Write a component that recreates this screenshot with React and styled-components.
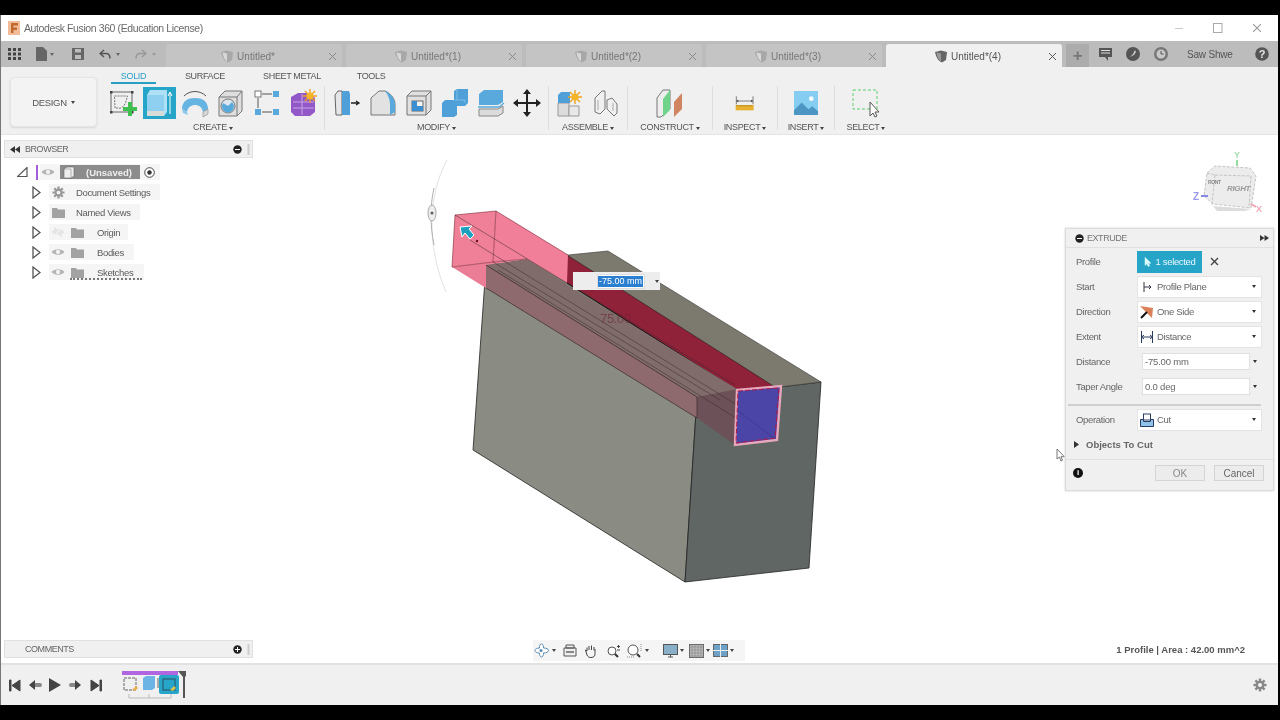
import React from 'react';
import styled, { createGlobalStyle } from 'styled-components';

const Global = createGlobalStyle`
  html, body { margin: 0; padding: 0; background: #000; }
  body { width: 1280px; height: 720px; overflow: hidden; font-family: "Liberation Sans", Arial, sans-serif; }
`;

const Shell = styled.div`
  width: 1280px;
  height: 720px;
  background: #000;
  padding: 15px 2px 15px 0;
  box-sizing: border-box;
`;
const Win = styled.div`
  height: 100%;
  display: flex;
  flex-direction: column;
  background: #fff;
  border-left: 1px solid #777;
  letter-spacing: -0.35px;
  filter: blur(0.4px);
`;

/* title bar */
const TitleBar = styled.div`
  height: 26px;
  flex: none;
  display: flex;
  align-items: center;
  padding: 0 16px 0 7px;
  background: #fff;
  color: #6a6a6a;
  font-size: 10.5px;
  letter-spacing: -0.4px;
`;
const TitleText = styled.span`
  margin-left: 4px;
  flex: 1;
`;
const WinButtons = styled.div`
  display: flex;
  align-items: center;
  gap: 29px;
`;

/* tabs */
const TabBar = styled.div`
  height: 26px;
  flex: none;
  display: flex;
  align-items: flex-end;
  background: #bcbcbc;
  padding-left: 7px;
`;
const QuickTools = styled.div`
  width: 158px;
  height: 26px;
  display: flex;
  align-items: center;
  flex: none;
  gap: 3px;
`;
const Tabs = styled.div`
  display: flex;
  gap: 4px;
  margin-right: 4px;
`;
const Tab = styled.div`
  width: 176px;
  height: 23px;
  box-sizing: border-box;
  position: relative;
  display: flex;
  align-items: center;
  justify-content: center;
  gap: 3px;
  padding: 2px 13px 0 0;
  border-radius: 3px 3px 0 0;
  background: ${(p) => (p.$active ? '#f0f0f0' : '#c4c4c4')};
  color: ${(p) => (p.$active ? '#555' : '#777')};
  font-size: 10px;
  letter-spacing: 0;
`;
const TabClose = styled.span`
  position: absolute;
  right: 5px;
  top: 8px;
  display: flex;
`;
const PlusTab = styled.div`
  width: 23px;
  height: 23px;
  background: #acacac;
  color: #777;
  display: flex;
  align-items: center;
  justify-content: center;
  font-size: 17px;
  font-weight: 700;
  margin-right: 2px;
`;
const AccountTools = styled.div`
  display: flex;
  align-items: center;
  height: 26px;
  flex: 1;
  color: #555;
  font-size: 10px;
`;
const AccountIcon = styled.span`
  width: 28px;
  display: flex;
  justify-content: center;
`;
const UserName = styled.span`
  margin-left: 12px;
  width: 47px;
  white-space: nowrap;
  letter-spacing: -0.2px;
  padding-top: 1px;
`;
const QuickIcon = styled.span`
  display: flex;
  align-items: center;
  margin-left: ${(p) => p.$ml || 0}px;
`;

/* ribbon */
const Ribbon = styled.div`
  height: 68px;
  flex: none;
  display: flex;
  background: #f0f0f0;
  border-bottom: 1px solid #e4e4e4;
  box-sizing: border-box;
`;
const DesignButton = styled.div`
  width: 87px;
  height: 50px;
  margin: 10px 8px 0 9px;
  box-sizing: border-box;
  border: 1px solid #e4e4e4;
  border-radius: 4px;
  box-shadow: 0 1px 2px #d8d8d8;
  background: #f3f3f3;
  display: flex;
  align-items: center;
  justify-content: center;
  gap: 4px;
  color: #555;
  font-size: 9.5px;
`;
const RibbonBody = styled.div`
  display: flex;
  flex-direction: column;
`;
const RibbonTabs = styled.div`
  display: flex;
  margin-left: 6px;
  height: 18px;
`;
const RibbonTab = styled.div`
  width: ${(p) => p.$w}px;
  box-sizing: border-box;
  height: 17px;
  display: flex;
  justify-content: center;
  padding-top: 4px;
  font-size: 9px;
  color: ${(p) => (p.$active ? '#2a9fc4' : '#555')};
  position: relative;
  &::after {
    content: '';
    display: ${(p) => (p.$active ? 'block' : 'none')};
    position: absolute;
    left: 0;
    right: 0;
    bottom: 0;
    height: 2px;
    background: #2a9fc4;
  }
`;
const Groups = styled.div`
  display: flex;
  height: 47px;
`;
const Group = styled.div`
  width: ${(p) => p.$w}px;
  display: flex;
  flex-direction: column;
  align-items: center;
  flex: none;
`;
const GroupSep = styled.div`
  width: 1px;
  height: 44px;
  margin: 1px 3px 0;
  background: #dedede;
`;
const ToolRow = styled.div`
  height: 35px;
  display: flex;
  align-items: center;
  justify-content: center;
`;
const Tool = styled.div`
  width: 36px;
  height: 32px;
  display: flex;
  align-items: center;
  justify-content: center;
`;
const GroupLabel = styled.div`
  margin-top: 2px;
  color: #555;
  font-size: 9px;
  white-space: nowrap;
`;

/* viewport */
const Viewport = styled.div`
  position: relative;
  flex: 1;
  background: #fff;
  overflow: hidden;
`;
const Scene = styled.svg`
  position: absolute;
  left: 0;
  top: 0;
`;
const Panel = styled.div`
  position: absolute;
  left: 3px;
  width: 249px;
  height: 18px;
  box-sizing: border-box;
  background: #f0f0f0;
  border: 1px solid #e0e0e0;
  display: flex;
  align-items: center;
  padding: 0 1px 0 5px;
  color: #666;
  font-size: 9px;
  letter-spacing: -0.45px;
  top: ${(p) => p.$top}px;
`;
const PanelName = styled.span`
  flex: 1;
  margin-left: ${(p) => p.$indent}px;
`;
const Tree = styled.div`
  position: absolute;
  left: 0;
  top: 27px;
  display: flex;
  flex-direction: column;
`;
const TreeRow = styled.div`
  height: 20px;
  display: flex;
  align-items: center;
  padding-left: ${(p) => p.$indent || 31}px;
`;
const Expander = styled.span`
  width: 17px;
  display: flex;
`;
const Chip = styled.div`
  position: relative;
  height: 16px;
  display: flex;
  align-items: center;
  background: #f5f5f5;
  color: #5a5a5a;
  font-size: 9.5px;
  width: ${(p) => p.$w}px;
`;
const Slot = styled.span`
  width: ${(p) => p.$w}px;
  box-sizing: border-box;
  padding-right: ${(p) => p.$pr || 0}px;
  display: flex;
  justify-content: center;
  flex: none;
`;
const ChipText = styled.span`
  margin-left: 9px;
  white-space: nowrap;
`;
const DashLine = styled.span`
  position: absolute;
  left: 21px;
  right: 2px;
  bottom: 0;
  border-bottom: 2px dotted #777;
`;
const RootBar = styled.span`
  width: 2px;
  height: 15px;
  background: #a45fd8;
  margin-right: 2px;
`;
const RootName = styled.div`
  width: 80px;
  height: 14px;
  background: #8c8c8c;
  color: #eee;
  font-weight: 700;
  font-size: 9.5px;
  letter-spacing: 0;
  display: flex;
  align-items: center;
`;
const RootLabel = styled.span`
  margin-left: 9px;
`;
const NavBar = styled.div`
  position: absolute;
  left: 532px;
  top: 505px;
  width: 212px;
  height: 21px;
  background: #f5f5f5;
  display: flex;
  align-items: center;
  padding-left: 1px;
  box-sizing: border-box;
  gap: 1px;
`;
const NavItem = styled.span`
  display: flex;
  align-items: center;
  margin-left: ${(p) => p.$ml || 0}px;
`;
const Status = styled.div`
  position: absolute;
  right: 33px;
  top: 509px;
  font-size: 9.5px;
  font-weight: 700;
  letter-spacing: 0;
  color: #555;
`;
const Caret = styled.span`
  display: inline-block;
  width: 0;
  height: 0;
  border-left: 2.5px solid transparent;
  border-right: 2.5px solid transparent;
  border-top: 3px solid ${(p) => p.$c || '#444'};
  margin-left: ${(p) => p.$ml || 0}px;
`;

/* floating distance input */
const FloatInput = styled.div`
  position: absolute;
  left: 572px;
  top: 137px;
  width: 87px;
  height: 18px;
  background: #ededed;
  display: flex;
  align-items: center;
  box-sizing: border-box;
  padding-left: 24px;
`;
const FloatField = styled.div`
  width: 46px;
  height: 13px;
  background: #fff;
  border: 1px solid #ddd;
  margin-right: 10px;
  display: flex;
  align-items: center;
`;
const Selected = styled.span`
  background: #2a7fd0;
  color: #fff;
  font-size: 9px;
  line-height: 11px;
  padding: 0 1px;
  white-space: nowrap;
  letter-spacing: 0;
`;

/* extrude dialog */
const Dialog = styled.div`
  position: absolute;
  left: 1064px;
  top: 93px;
  width: 209px;
  height: 263px;
  box-sizing: border-box;
  background: #f0f0f0;
  border: 1px solid #dcdcdc;
  box-shadow: 0 0 2px #ccc;
  display: flex;
  flex-direction: column;
  color: #666;
  font-size: 9.5px;
`;
const DialogHead = styled.div`
  height: 18px;
  flex: none;
  display: flex;
  align-items: center;
  padding: 0 4px 0 9px;
  border-bottom: 1px solid #e0e0e0;
  color: #777;
  font-size: 9px;
  letter-spacing: -0.45px;
`;
const DialogTitle = styled.span`
  flex: 1;
  margin-left: 3px;
`;
const Rows = styled.div`
  display: flex;
  flex-direction: column;
  padding: ${(p) => p.$pt ?? 1}px 0 0 10px;
`;
const Row = styled.div`
  height: 25px;
  display: flex;
  align-items: center;
`;
const RowLabel = styled.span`
  width: 61px;
  flex: none;
`;
const SelectionButton = styled.div`
  width: 65px;
  height: 22px;
  background: #27a5c8;
  color: #e8f8fc;
  display: flex;
  align-items: center;
  justify-content: center;
  gap: 4px;
`;
const ClearButton = styled.span`
  margin-left: 8px;
  display: flex;
`;
const SelectBox = styled.div`
  width: 125px;
  height: 22px;
  box-sizing: border-box;
  background: #fff;
  border: 1px solid #e4e4e4;
  display: flex;
  align-items: center;
  padding: 0 5px 0 2px;
  gap: 3px;
  color: #666;
`;
const SelectText = styled.span`
  flex: 1;
`;
const InputBox = styled.div`
  width: 108px;
  height: 17px;
  box-sizing: border-box;
  margin-left: 5px;
  background: #fff;
  border: 1px solid #e0e0e0;
  display: flex;
  align-items: center;
  padding-left: 2px;
  margin-right: 3px;
  letter-spacing: -0.2px;
`;
const Divider = styled.div`
  height: 2px;
  margin: 5px 12px 1px 2px;
  background: #cfcfcf;
`;
const ObjectsRow = styled.div`
  height: 25px;
  display: flex;
  align-items: center;
  gap: 7px;
  margin-left: -2px;
  font-weight: 700;
  letter-spacing: 0;
  color: #666;
`;
const Footer = styled.div`
  margin-top: 2px;
  border-top: 1px solid #e0e0e0;
  flex: 1;
  display: flex;
  align-items: flex-start;
  padding: 5px 8px 0 7px;
`;
const InfoDot = styled.span`
  width: 10px;
  height: 10px;
  border-radius: 50%;
  background: #111;
  color: #fff;
  font-size: 8px;
  font-weight: 700;
  line-height: 10px;
  text-align: center;
  margin: 3px 72px 0 0;
`;
const DialogButton = styled.div`
  width: 50px;
  height: 16px;
  box-sizing: border-box;
  border: 1px solid #d4d4d4;
  background: #ececec;
  color: ${(p) => (p.$dim ? '#888' : '#666')};
  font-size: 10px;
  letter-spacing: 0;
  display: flex;
  align-items: center;
  justify-content: center;
  margin-right: 9px;
  &:last-child { margin-right: 0; }
`;

/* timeline */
const Timeline = styled.div`
  height: 42px;
  flex: none;
  display: flex;
  align-items: center;
  background: #f0f0f0;
  border-top: 2px solid #e2e2e2;
  box-sizing: border-box;
  padding: 0 11px 0 8px;
`;
const Player = styled.div`
  display: flex;
  align-items: center;
  gap: 5px;
`;
const History = styled.div`
  margin-left: 18px;
  flex: 1;
  display: flex;
`;

/* ---- drawings ---- */
const X = ({ c = '#777', s = 9, sw = 1 }) => (
  <svg width={s} height={s} viewBox="0 0 9 9"><path d="M1 1l7 7M8 1L1 8" stroke={c} strokeWidth={sw} /></svg>
);
const TabCube = ({ dark }) => (
  <svg width="14" height="13" viewBox="0 0 14 13">
    <path d="M1 2l6-1.500 6 1.500-1 8-4 2.500C4 11 2 7 1 2z" fill={dark ? '#666' : '#a8a8a8'} />
    <path d="M2.500 2.500L7 3.500v8C5 10 3 7 2.500 2.500z" fill={dark ? '#999' : '#d8d8d8'} />
  </svg>
);
const Eye = ({ off }) => (
  <svg width="14" height="10" viewBox="0 0 13 9">
    <path d="M.5 4.500C3 1 10 1 12.500 4.500 10 8 3 8 .5 4.500z" fill={off ? '#e4e4e4' : '#b4b4b4'} />
    <circle cx="6.500" cy="4.500" r="2" fill={off ? '#f4f4f4' : '#f2f2f2'} />
    {off && <path d="M3 .5l7 8" stroke="#ddd" />}
  </svg>
);
const Folder = () => (
  <svg width="13" height="11" viewBox="0 0 13 11">
    <path d="M0 1h5l1 1.500h7V11H0z" fill="#a2a2a2" />
  </svg>
);
const Gear = ({ c = '#999', s = 13 }) => (
  <svg width={s} height={s} viewBox="0 0 14 14">
    <g stroke={c} strokeWidth="2.400">
      <path d="M7 .5v13M.5 7h13M2.400 2.400l9.200 9.200M11.600 2.400l-9.200 9.200" />
    </g>
    <circle cx="7" cy="7" r="4.300" fill={c} />
    <circle cx="7" cy="7" r="2" fill="#f4f4f4" />
  </svg>
);
const Expand = () => (
  <svg width="9" height="13" viewBox="0 0 9 13"><path d="M1 1l7 5.500L1 12z" fill="#fff" stroke="#555" strokeWidth="1.300" /></svg>
);
const MinusDot = ({ plus }) => (
  <svg width="9" height="9" viewBox="0 0 9 9">
    <circle cx="4.500" cy="4.500" r="4.200" fill="#222" />
    <path d={plus ? 'M2 4.500h5M4.500 2v5' : 'M2 4.500h5'} stroke="#fff" />
  </svg>
);
const Grip = () => (
  <svg width="4" height="11" viewBox="0 0 4 11"><path d="M1.500 0v11" stroke="#ccc" strokeWidth="2" /></svg>
);

const Sketch = () => (
  <svg width="30" height="30" viewBox="0 0 30 30">
    <rect x="3" y="4" width="21" height="20" fill="none" stroke="#666" />
    <path d="M6.500 8h13l-2 7c-2 4-5 6-7 5H7z" fill="none" stroke="#777" strokeDasharray="2 1" />
    {[[3, 4], [24, 4], [3, 24], [24, 24]].map(([x, y]) => <rect key={x + '' + y} x={x - 1} y={y - 1} width="2.500" height="2.500" fill="#444" />)}
    <path d="M22 14v14M15 21h14" stroke="#3fbf4f" strokeWidth="4" />
  </svg>
);
const ExtrudeTool = () => (
  <svg width="33" height="32" viewBox="0 0 33 32">
    <rect width="33" height="32" fill="#27a5c8" />
    <path d="M4 8l3-5h17v22l-3 4H4z" fill="#aee0f6" />
    <path d="M4 8h17v21H4z" fill="#8fd0f0" />
    <path d="M4 24h17v5H4z" fill="#d8dcd8" />
    <path d="M27 27V6M25 9l2-4 2 4" stroke="#fff" fill="none" />
  </svg>
);
const Revolve = () => (
  <svg width="30" height="30" viewBox="0 0 30 30">
    <path d="M2 21c0-8 6-11 13-11s13 3 13 11l-5 3c-1-5-4-7-8-7s-7 2-8 7z" fill="#66b4e2" />
    <path d="M2 21l5 3 1 3-5-2z" fill="#8cc7ea" />
    <path d="M23 24l5-3v5l-5 3z" fill="#d8d8d8" stroke="#888" strokeWidth=".6" />
    <path d="M4 8c6-6 16-6 22 0" fill="none" stroke="#555" />
  </svg>
);
const Hole = () => (
  <svg width="30" height="30" viewBox="0 0 30 30">
    <path d="M3 9l6-6h17v20l-5 5H3z" fill="#dedede" stroke="#777" />
    <path d="M3 9h18v19M21 9l5-6" fill="none" stroke="#777" />
    <circle cx="12" cy="18" r="7" fill="#dce6ec" stroke="#777" />
    <path d="M12 18l-5-3a6 6 0 1 0 9-1z" fill="#5aa9dc" />
  </svg>
);
const PatternTool = () => (
  <svg width="30" height="30" viewBox="0 0 30 30">
    <rect x="3" y="3" width="6" height="6" fill="#fff" stroke="#777" />
    <rect x="21" y="3" width="6" height="6" fill="#5aa9dc" />
    <rect x="3" y="21" width="6" height="6" fill="#5aa9dc" />
    <rect x="21" y="21" width="6" height="6" fill="#5aa9dc" />
    <path d="M10 6h10M6 10v10M10 24h10" stroke="#555" />
  </svg>
);
const Star = ({ cx, cy }) => (
  <g>
    <path d={`M${cx} ${cy - 7}v14M${cx - 7} ${cy}h14M${cx - 5} ${cy - 5}l10 10M${cx + 5} ${cy - 5}l-10 10`} stroke="#f0a020" strokeWidth="1.400" />
    <circle cx={cx} cy={cy} r="3.600" fill="#f5b52a" />
  </g>
);
const FormTool = () => (
  <svg width="30" height="30" viewBox="0 0 30 30">
    <path d="M3 9l7-4h12l5 5v14l-5 4H7l-4-4z" fill="#9358c8" />
    <path d="M5 14h21M14 6v21M5 20h21" stroke="#c7a4e4" />
    <Star cx={22} cy={8} />
  </svg>
);
const PressPull = () => (
  <svg width="30" height="30" viewBox="0 0 30 30">
    <path d="M3 7l3-4h4v24H4z" fill="#e6e6e6" stroke="#666" />
    <path d="M10 3h7l1 3v21h-8z" fill="#4f9fd8" />
    <path d="M19 15h7M24 13l3 2-3 2" stroke="#222" fill="none" strokeWidth="1.300" />
  </svg>
);
const Fillet = () => (
  <svg width="30" height="30" viewBox="0 0 30 30">
    <path d="M3 10l8-7h6c7 3 10 9 10 13v11H3z" fill="#e2e2e2" stroke="#777" />
    <path d="M17 3c7 3 10 9 10 13v8l-5 3V16c0-5-2-9-5-13z" fill="#5aa9dc" />
  </svg>
);
const Shell3d = () => (
  <svg width="30" height="30" viewBox="0 0 30 30">
    <path d="M3 8l5-5h19v19l-5 5H3z" fill="#e0e0e0" stroke="#777" />
    <path d="M3 8h19v19M22 8l5-5" fill="none" stroke="#777" />
    <rect x="8" y="13" width="11" height="10" fill="#f4f4f4" stroke="#666" />
    <path d="M8 13h5v5h6v5H8z" fill="#3b8fd0" />
  </svg>
);
const Combine = () => (
  <svg width="30" height="30" viewBox="0 0 30 30">
    <path d="M2 15l3-3h9v-9l3-2h11v14l-3 3h-8v9l-3 2H2z" fill="#4f9fd8" />
    <path d="M14 12h11v3M17 1v11" stroke="#7cbde8" fill="none" />
  </svg>
);
const Split = () => (
  <svg width="30" height="30" viewBox="0 0 30 30">
    <path d="M3 6l5-4h19v12l-5 3H3z" fill="#5aa9dc" />
    <path d="M2 19h21l5-4" stroke="#5aa9dc" strokeWidth="1.400" fill="none" />
    <path d="M3 21h19l5-3v7l-5 3H3z" fill="#dcdcdc" stroke="#888" />
  </svg>
);
const MoveTool = () => (
  <svg width="30" height="30" viewBox="0 0 30 30">
    <path d="M15 3v24M3 15h24" stroke="#222" strokeWidth="2" />
    <path d="M15 1l4 5h-8zM15 29l4-5h-8zM1 15l5-4v8zM29 15l-5-4v8z" fill="#222" />
  </svg>
);
const NewComponent = () => (
  <svg width="30" height="30" viewBox="0 0 30 30">
    <path d="M3 15h11v13H3z" fill="#dcdcdc" stroke="#999" />
    <path d="M14 18h10v10H14z" fill="#e8e8e8" stroke="#999" />
    <path d="M3 7l3-3h9v11H3z" fill="#4f9fd8" />
    <Star cx={20} cy={9} />
  </svg>
);
const JointTool = () => (
  <svg width="30" height="30" viewBox="0 0 30 30">
    <path d="M4 24V10l7-7h3v18l-5 5z" fill="#f0f0f0" stroke="#777" />
    <path d="M16 12l5-2 5 6v9l-3 3-7-7z" fill="#f0f0f0" stroke="#777" />
    <path d="M7 12v10M22 15v8" stroke="#aaa" />
  </svg>
);
const PlaneTool = () => (
  <svg width="30" height="30" viewBox="0 0 30 30">
    <path d="M2 10l6-8h7v19l-9 8H2z" fill="#eee" stroke="#777" />
    <path d="M8 11l7-9v20l-7 7z" fill="#6fd48a" />
    <path d="M19 14l8-9v16l-8 8z" fill="#d08560" />
  </svg>
);
const Ruler = () => (
  <svg width="26" height="16" viewBox="0 0 30 24">
    <path d="M2 2v12M27 2v12M2 9h25" stroke="#444" fill="none" />
    <path d="M2 9l3-2v4zM27 9l-3-2v4z" fill="#444" />
    <rect x="1" y="15" width="27" height="8" fill="#e8b030" />
    <path d="M3 15v2M6 15v2M9 15v2M12 15v2M15 15v2M18 15v2M21 15v2M24 15v2" stroke="#8a6a10" />
  </svg>
);
const Picture = () => (
  <svg width="24" height="24" viewBox="0 0 25 25">
    <rect width="25" height="25" fill="#86cdf2" />
    <circle cx="18" cy="8" r="2.500" fill="#f4f9fb" />
    <path d="M0 20l8-8 7 7 4-3 6 5v4H0z" fill="#4d96c4" />
  </svg>
);
const SelectTool = () => (
  <svg width="32" height="32" viewBox="0 0 32 32">
    <rect x="3" y="3" width="24" height="19" fill="none" stroke="#5ecf6c" strokeDasharray="3 2" />
    <path d="M20 15v14l3-3 2 4 2-1-2-4h4z" fill="#fff" stroke="#555" />
  </svg>
);
const Pointer = ({ fill = '#fff', stroke = '#555', s = 12 }) => (
  <svg width={s * 0.8} height={s} viewBox="0 0 8 12">
    <path d="M.5.5v9.500l2.300-2 1.400 3.300 1.700-.7-1.400-3.200H7.500z" fill={fill} stroke={stroke} strokeWidth=".7" />
  </svg>
);

const ModelScene = () => (
  <Scene width="1277" height="527" viewBox="1 135 1277 527">
    {/* rotate manipulator */}
    <path d="M447 160C428 195 426 245 446 292" fill="none" stroke="#e2e2e2" />
    <path d="M434 188C430 205 430 225 434 245" fill="none" stroke="#b0b0b0" />
    <ellipse cx="432" cy="213" rx="4" ry="8" fill="#eee" stroke="#aaa" />
    <circle cx="432" cy="213" r="1.600" fill="#666" />
    {/* block */}
    <path d="M486 265L473 450 685 582 697 397z" fill="#8a8b82" stroke="#222" strokeWidth=".8" />
    <path d="M697 397L821 382 809 568 685 582z" fill="#606663" stroke="#222" strokeWidth=".8" />
    <path d="M568 255L608 251 821 382 697 397 486 265z" fill="#7c796f" stroke="#333" strokeWidth=".6" />
    {/* cut slot */}
    <path d="M567 255L775 387 737 390 567 283z" fill="#8f2139" />
    <path d="M567 283L737 390" stroke="#111" strokeWidth="1" />
    <path d="M567 255L775 387" stroke="#222" strokeWidth=".6" />
    <path d="M486 265L527 259 578 292 737 389 697 397z" fill="#806c6a" />
    <path d="M486 265L697 397 697 418 486 288z" fill="#8e6a6e" />
    <path d="M697 397L737 389 735 445 697 418z" fill="#6c5158" />
    <path d="M697 397L486 265M697 418L486 288M697 397v21" stroke="#3a2a2c" strokeWidth=".7" fill="none" />
    {/* extrusion preview */}
    <path d="M455 215L496 211 493 262 452 267z" fill="#ef8098" />
    <path d="M496 211L568 255 567 283 527 259 493 262z" fill="#f17f99" />
    <path d="M452 267L493 262 527 259 486 265 486 288z" fill="#ec7d96" />
    <path d="M455 215L496 211 493 262 452 267zM496 211L568 255M493 262L527 259" fill="none" stroke="#7a2838" strokeWidth=".6" />
    <path d="M455 215L735 385M470 240L737 405M493 262L720 400M498 270L736 418" stroke="#3c2a2c" strokeWidth=".5" fill="none" />
    {/* profile */}
    <path d="M737 390L781 386 777 440 735 445z" fill="#4c45a8" stroke="#e8a8bc" strokeWidth="2.400" />
    <path d="M738 391L779 388 775 438 736 443z" fill="none" stroke="#b01840" strokeWidth="1" strokeDasharray="5 2" />
    <path d="M737 410L775 439" stroke="#36307c" strokeWidth=".5" />
    <circle cx="477" cy="241" r="1.200" fill="#6b1020" />
    <text x="600" y="323" fontSize="13" fill="#6a2030" opacity=".55" fontFamily="Liberation Sans, sans-serif">75.00</text>
    {/* direction arrow */}
    <path d="M460 227l12-1-3 3 5 6-4 4-5-6-3 4z" fill="#1da0c0" stroke="#fff" strokeWidth="1" />
    {/* view cube */}
    <g style={{ filter: 'blur(0.5px)' }}>
      <g transform="translate(0 -6)">
        <path d="M1207 179l8-7 35 2 6 8-5 32-38-4-9-8z" fill="#ececec" stroke="#c4c4c4" strokeDasharray="3 1.500" />
        <path d="M1215 181l36 1-2 32M1215 181l-3 30M1207 179l8 2" fill="none" stroke="#c4c4c4" strokeDasharray="3 1.500" />
        <path d="M1213 212l38 3-6 2-28 0z" fill="#dcdcdc" />
        <text x="1227" y="197" fontSize="8" fontWeight="700" fontStyle="italic" fill="#999" fontFamily="Liberation Sans, sans-serif">RIGHT</text>
        <text x="1208" y="190" fontSize="5" fontWeight="700" fill="#888" fontFamily="Liberation Sans, sans-serif">RONT</text>
      </g>
      <path d="M1237 166v-6" stroke="#8fdc9e" strokeWidth="2" />
      <text x="1234" y="158" fontSize="9" fontWeight="700" fill="#a5e0b0" fontFamily="Liberation Sans, sans-serif">Y</text>
      <path d="M1201 196h7" stroke="#8888e8" strokeWidth="2" />
      <text x="1193" y="200" fontSize="10" fontWeight="700" fill="#9a9aea" fontFamily="Liberation Sans, sans-serif">Z</text>
      <path d="M1251 204l5 3" stroke="#f0a0b0" strokeWidth="2" />
      <text x="1256" y="212" fontSize="9" fontWeight="700" fill="#f0a8b8" fontFamily="Liberation Sans, sans-serif">X</text>
    </g>
    {/* mouse */}
    <path d="M1057 449v10l2.500-2 1.500 4 1.500-.7-1.500-3.600h3.300z" fill="#fff" stroke="#555" strokeWidth=".8" />
  </Scene>
);

const TreeItem = ({ w, icons, name, dashed }) => (
  <TreeRow>
    <Expander><Expand /></Expander>
    <Chip $w={w}>
      {icons[0] === 'eye' && <Slot $w={18}><Eye /></Slot>}
      {icons[0] === 'off' && <Slot $w={18}><Eye off /></Slot>}
      {icons[0] === 'gear' && <Slot $w={18}><Gear /></Slot>}
      {icons[0] === 'folder' && <Slot $w={18}><Folder /></Slot>}
      {icons[1] && <Slot $w={21}><Folder /></Slot>}
      <ChipText>{name}</ChipText>
      {dashed && <DashLine />}
    </Chip>
  </TreeRow>
);

const SmallIcon = ({ d, fill = 'none', stroke = '#444', w = 14, h = 14, vb = '0 0 14 14', sw = 1 }) => (
  <svg width={w} height={h} viewBox={vb}><path d={d} fill={fill} stroke={stroke} strokeWidth={sw} /></svg>
);

export default function App() {
  return (
    <Shell>
      <Global />
      <Win>
        <TitleBar>
          <svg width="12" height="14" viewBox="0 0 12 14">
            <rect width="12" height="14" fill="#f3bc98" />
            <path d="M3 2h7v2.500H5.500v2H9V9H5.500v3H3z" fill="#c06a30" />
          </svg>
          <TitleText>Autodesk Fusion 360 (Education License)</TitleText>
          <WinButtons>
            <svg width="10" height="9" viewBox="0 0 10 9"><path d="M1 4.500h8" stroke="#ccc" /></svg>
            <svg width="10" height="10" viewBox="0 0 10 10"><rect x=".5" y=".5" width="8.500" height="9" fill="none" stroke="#aaa" /></svg>
            <X c="#999" s={10} />
          </WinButtons>
        </TitleBar>

        <TabBar>
          <QuickTools>
            <QuickIcon>
              <svg width="13" height="12" viewBox="0 0 13 12"><path d="M0 0h3v3H0zM5 0h3v3H5zM10 0h3v3h-3zM0 4.500h3v3H0zM5 4.500h3v3H5zM10 4.500h3v3h-3zM0 9h3v3H0zM5 9h3v3H5zM10 9h3v3h-3z" fill="#444" /></svg>
            </QuickIcon>
            <QuickIcon $ml={12}>
              <svg width="11" height="14" viewBox="0 0 11 14"><path d="M0 0h7l4 4v10H0z" fill="#666" /></svg>
            </QuickIcon>
            <Caret $c="#666" />
            <QuickIcon $ml={15}>
              <svg width="12" height="12" viewBox="0 0 12 12"><path d="M0 0h12v12H0z" fill="#666" /><path d="M3 1h6v3.500H3zM3 7h6v4H3z" fill="#bcbcbc" /></svg>
            </QuickIcon>
            <QuickIcon $ml={12}>
              <svg width="12" height="11" viewBox="0 0 12 11"><path d="M5 1L1 4.500 5 8M1 4.500h6c3 0 4 2 4 5" fill="none" stroke="#555" strokeWidth="1.500" /></svg>
            </QuickIcon>
            <Caret $c="#666" $ml={2} />
            <QuickIcon $ml={12}>
              <svg width="12" height="11" viewBox="0 0 12 11"><path d="M7 1l4 3.500L7 8M11 4.500H5c-3 0-4 2-4 5" fill="none" stroke="#999" strokeWidth="1.500" /></svg>
            </QuickIcon>
            <Caret $c="#999" $ml={2} />
          </QuickTools>
          <Tabs>
            {['Untitled*', 'Untitled*(1)', 'Untitled*(2)', 'Untitled*(3)', 'Untitled*(4)'].map((name, i) => (
              <Tab key={name} $active={i === 4}>
                <TabCube dark={i === 4} />
                {name}
                <TabClose><X c={i === 4 ? '#555' : '#888'} /></TabClose>
              </Tab>
            ))}
          </Tabs>
          <PlusTab>+</PlusTab>
          <AccountTools>
            <AccountIcon>
              <svg width="13" height="13" viewBox="0 0 13 13"><path d="M0 0h13v9H9v4L6 9H0z" fill="#555" /><path d="M2 2.500h9M2 5h9" stroke="#ddd" /></svg>
            </AccountIcon>
            <AccountIcon>
              <svg width="14" height="14" viewBox="0 0 14 14"><circle cx="7" cy="7" r="7" fill="#555" /><path d="M4 10l3-3 2-4 1 2-2 3z" fill="#ccc" /></svg>
            </AccountIcon>
            <AccountIcon>
              <svg width="14" height="14" viewBox="0 0 14 14"><circle cx="7" cy="7" r="7" fill="#777" /><circle cx="7" cy="7" r="4.500" fill="#c8c8c8" /><path d="M7 4v3h2.500" stroke="#555" fill="none" /></svg>
            </AccountIcon>
            <UserName>Saw Shwe</UserName>
            <QuickIcon $ml={21}>
              <svg width="14" height="14" viewBox="0 0 14 14">
                <circle cx="7" cy="7" r="6.800" fill="#555" />
                <text x="7" y="11" textAnchor="middle" fontSize="11" fontWeight="700" fill="#e8e8e8" fontFamily="Liberation Sans, sans-serif">?</text>
              </svg>
            </QuickIcon>
          </AccountTools>
        </TabBar>

        <Ribbon>
          <DesignButton>DESIGN <Caret /></DesignButton>
          <RibbonBody>
            <RibbonTabs>
              <RibbonTab $w={45} $active>SOLID</RibbonTab>
              <RibbonTab $w={98}>SURFACE</RibbonTab>
              <RibbonTab $w={76}>SHEET METAL</RibbonTab>
              <RibbonTab $w={82}>TOOLS</RibbonTab>
            </RibbonTabs>
            <Groups>
              <Group $w={216}>
                <ToolRow>
                  <Tool><Sketch /></Tool>
                  <Tool><ExtrudeTool /></Tool>
                  <Tool><Revolve /></Tool>
                  <Tool><Hole /></Tool>
                  <Tool><PatternTool /></Tool>
                  <Tool><FormTool /></Tool>
                </ToolRow>
                <GroupLabel>CREATE <Caret /></GroupLabel>
              </Group>
              <GroupSep />
              <Group $w={217}>
                <ToolRow>
                  <Tool><PressPull /></Tool>
                  <Tool><Fillet /></Tool>
                  <Tool><Shell3d /></Tool>
                  <Tool><Combine /></Tool>
                  <Tool><Split /></Tool>
                  <Tool><MoveTool /></Tool>
                </ToolRow>
                <GroupLabel>MODIFY <Caret /></GroupLabel>
              </Group>
              <GroupSep />
              <Group $w={72}>
                <ToolRow>
                  <Tool><NewComponent /></Tool>
                  <Tool><JointTool /></Tool>
                </ToolRow>
                <GroupLabel>ASSEMBLE <Caret /></GroupLabel>
              </Group>
              <GroupSep />
              <Group $w={78}>
                <ToolRow><Tool><PlaneTool /></Tool></ToolRow>
                <GroupLabel>CONSTRUCT <Caret /></GroupLabel>
              </Group>
              <GroupSep />
              <Group $w={58}>
                <ToolRow><Tool><Ruler /></Tool></ToolRow>
                <GroupLabel>INSPECT <Caret /></GroupLabel>
              </Group>
              <GroupSep />
              <Group $w={50}>
                <ToolRow><Tool><Picture /></Tool></ToolRow>
                <GroupLabel>INSERT <Caret /></GroupLabel>
              </Group>
              <GroupSep />
              <Group $w={56}>
                <ToolRow><Tool><SelectTool /></Tool></ToolRow>
                <GroupLabel>SELECT <Caret /></GroupLabel>
              </Group>
            </Groups>
          </RibbonBody>
        </Ribbon>

        <Viewport>
          <ModelScene />

          <Panel $top={5}>
            <svg width="10" height="7" viewBox="0 0 10 7"><path d="M5 0v7L0 3.500zM10 0v7L5 3.500z" fill="#333" /></svg>
            <PanelName $indent={5}>BROWSER</PanelName>
            <MinusDot />
            <QuickIcon $ml={5}><Grip /></QuickIcon>
          </Panel>
          <Tree>
            <TreeRow $indent={16}>
              <QuickIcon>
                <svg width="11" height="10" viewBox="0 0 11 10"><path d="M10 .5v9H.5z" fill="#fff" stroke="#555" strokeWidth="1.200" /></svg>
              </QuickIcon>
              <QuickIcon $ml={8}><RootBar /></QuickIcon>
              <Chip $w={120}>
                <Slot $w={20} $pr={5}><Eye /></Slot>
                <RootName>
                  <QuickIcon $ml={3}>
                    <svg width="14" height="13" viewBox="0 0 14 13"><path d="M1 3l3-2h7v9l-3 2H1z" fill="#eee" stroke="#666" strokeWidth=".6" /><path d="M1 3h7v9" fill="none" stroke="#888" strokeWidth=".6" /></svg>
                  </QuickIcon>
                  <RootLabel>(Unsaved)</RootLabel>
                </RootName>
                <Slot $w={18}>
                  <svg width="11" height="11" viewBox="0 0 11 11"><circle cx="5.500" cy="5.500" r="4.800" fill="#fff" stroke="#444" /><circle cx="5.500" cy="5.500" r="2.200" fill="#333" /></svg>
                </Slot>
              </Chip>
            </TreeRow>
            <TreeItem w={111} icons={['gear']} name="Document Settings" />
            <TreeItem w={91} icons={['folder']} name="Named Views" />
            <TreeItem w={79} icons={['off', 'folder']} name="Origin" />
            <TreeItem w={85} icons={['eye', 'folder']} name="Bodies" />
            <TreeItem w={95} icons={['eye', 'folder']} name="Sketches" dashed />
          </Tree>

          <FloatInput>
            <FloatField><Selected>-75.00 mm</Selected></FloatField>
            <Caret />
          </FloatInput>

          <Dialog>
            <DialogHead>
              <MinusDot />
              <DialogTitle>EXTRUDE</DialogTitle>
              <svg width="9" height="6" viewBox="0 0 9 6"><path d="M0 0v6l4.500-3zM4.500 0v6L9 3z" fill="#333" /></svg>
            </DialogHead>
            <Rows>
              <Row>
                <RowLabel>Profile</RowLabel>
                <SelectionButton><Pointer fill="#dff" stroke="#dff" s={10} />1 selected</SelectionButton>
                <ClearButton><X c="#444" s={9} sw={1.4} /></ClearButton>
              </Row>
              <Row>
                <RowLabel>Start</RowLabel>
                <SelectBox>
                  <SmallIcon d="M4 2v10M4 7h7M9 5l2 2-2 2" stroke="#334" />
                  <SelectText>Profile Plane</SelectText>
                  <Caret $c="#333" />
                </SelectBox>
              </Row>
              <Row>
                <RowLabel>Direction</RowLabel>
                <SelectBox>
                  <svg width="14" height="14" viewBox="0 0 14 14">
                    <path d="M0 1l13 2-1 10-6-6z" fill="#d98058" />
                    <path d="M1 13l6-6" stroke="#111" strokeWidth="2" />
                  </svg>
                  <SelectText>One Side</SelectText>
                  <Caret $c="#333" />
                </SelectBox>
              </Row>
              <Row>
                <RowLabel>Extent</RowLabel>
                <SelectBox>
                  <SmallIcon d="M1.500 1v12M12.500 1v12M1.500 7h11M4 5L1.500 7 4 9M10 5l2.500 2L10 9" stroke="#2a3a60" />
                  <SelectText>Distance</SelectText>
                  <Caret $c="#333" />
                </SelectBox>
              </Row>
              <Row>
                <RowLabel>Distance</RowLabel>
                <InputBox>-75.00 mm</InputBox>
                <Caret $c="#333" />
              </Row>
              <Row>
                <RowLabel>Taper Angle</RowLabel>
                <InputBox>0.0 deg</InputBox>
                <Caret $c="#333" />
              </Row>
            </Rows>
            <Divider />
            <Rows $pt={0}>
              <Row>
                <RowLabel>Operation</RowLabel>
                <SelectBox>
                  <svg width="14" height="14" viewBox="0 0 14 14">
                    <rect x="3.500" y="1" width="7" height="6" fill="#fff" stroke="#2a3a60" />
                    <path d="M.5 6.500h3v2h7v-2h3v7H.5z" fill="#8fc4e8" stroke="#2a3a60" />
                  </svg>
                  <SelectText>Cut</SelectText>
                  <Caret $c="#333" />
                </SelectBox>
              </Row>
              <ObjectsRow>
                <svg width="5" height="7" viewBox="0 0 5 7"><path d="M0 0l5 3.500L0 7z" fill="#333" /></svg>
                Objects To Cut
              </ObjectsRow>
            </Rows>
            <Footer>
              <InfoDot>i</InfoDot>
              <DialogButton $dim>OK</DialogButton>
              <DialogButton>Cancel</DialogButton>
            </Footer>
          </Dialog>

          <Panel $top={505}>
            <PanelName $indent={15}>COMMENTS</PanelName>
            <MinusDot plus />
            <QuickIcon $ml={5}><Grip /></QuickIcon>
          </Panel>

          <NavBar>
            <NavItem>
              <svg width="15" height="15" viewBox="0 0 15 15"><path d="M7.500 1c2 0 2 3 2 4 3 0 5 1 5 2.500S12 10 9.500 10c0 2-.5 4-2 4s-2-2-2-4C3 10 1 9 1 7.500S3 5 5.500 5c0-2 0-4 2-4z" fill="#fff" stroke="#5a8ab0" /><circle cx="7" cy="7.500" r="1.500" fill="#5a8ab0" /></svg>
              <Caret $ml={3} />
            </NavItem>
            <NavItem $ml={6}>
              <svg width="14" height="13" viewBox="0 0 14 13"><path d="M1 4h12v8H1zM3 1h8v3H3z" fill="#eee" stroke="#555" /><path d="M3 7h8v2H3z" fill="#888" /></svg>
            </NavItem>
            <NavItem $ml={6}>
              <svg width="14" height="14" viewBox="0 0 14 14"><path d="M3 7V3.500M5 6V2M7.500 6V1.500M10 6.500V3M3 7L1.500 6 3 11c1 2 2 2.500 4 2.500 3 0 4-1.500 4-4V5" fill="none" stroke="#444" /></svg>
            </NavItem>
            <NavItem $ml={7}>
              <svg width="15" height="14" viewBox="0 0 15 14"><circle cx="6" cy="7" r="4" fill="#fff" stroke="#555" /><path d="M9 10l3 3" stroke="#333" strokeWidth="2" /><path d="M11 2.500h3M12.500 1v3M11 6h3" stroke="#444" /></svg>
            </NavItem>
            <NavItem $ml={4}>
              <svg width="16" height="15" viewBox="0 0 16 15"><circle cx="7" cy="7" r="5" fill="#fff" stroke="#555" /><path d="M11 11l3 3" stroke="#333" strokeWidth="2" /><path d="M1 14h8M15 1v8" stroke="#888" strokeDasharray="1 1" /></svg>
              <Caret $ml={3} />
            </NavItem>
            <NavItem $ml={13}>
              <svg width="15" height="14" viewBox="0 0 15 14"><rect x=".5" y=".5" width="14" height="10" fill="#8ab0c8" stroke="#555" /><path d="M5 13h5M7.500 10.500V13" stroke="#555" /></svg>
              <Caret $ml={2} />
            </NavItem>
            <NavItem $ml={4}>
              <svg width="15" height="14" viewBox="0 0 15 14"><rect x=".5" y=".5" width="14" height="13" fill="#bbb" stroke="#666" /><path d="M3 0v14M6 0v14M9 0v14M12 0v14M0 3h15M0 6h15M0 9h15M0 12h15" stroke="#888" strokeWidth=".6" /></svg>
              <Caret $ml={2} />
            </NavItem>
            <NavItem $ml={2}>
              <svg width="15" height="13" viewBox="0 0 15 13"><rect x=".5" y=".5" width="14" height="12" fill="#6ea2c8" stroke="#666" /><path d="M7.500 0v13M0 6.500h15" stroke="#eee" /></svg>
              <Caret $ml={2} />
            </NavItem>
          </NavBar>

          <Status>1 Profile | Area : 42.00 mm^2</Status>
        </Viewport>

        <Timeline>
          <Player>
            <SmallIcon w={12} h={13} vb="0 0 12 13" stroke="#444" fill="#444" d="M.5 1h1.500v11H.5zM11 1v11L3 6.500z" />
            <QuickIcon $ml={3}>
              <svg width="14" height="12" viewBox="0 0 14 12"><path d="M0 6l6-5v10z" fill="#444" /><path d="M6 4h5a2 2 0 0 1 0 4H6z" fill="#888" /></svg>
            </QuickIcon>
            <QuickIcon $ml={1}>
              <svg width="12" height="14" viewBox="0 0 12 14"><path d="M0 0l12 7-12 7z" fill="#444" /></svg>
            </QuickIcon>
            <QuickIcon $ml={3}>
              <svg width="12" height="12" viewBox="0 0 12 12"><path d="M12 6L6 1v10z" fill="#444" /><path d="M6 4H2a2 2 0 0 0 0 4h4z" fill="#888" /></svg>
            </QuickIcon>
            <QuickIcon $ml={4}>
              <SmallIcon w={12} h={13} vb="0 0 12 13" stroke="#444" fill="#444" d="M10 1h1.500v11H10zM1 1v11l8-5.500z" />
            </QuickIcon>
          </Player>
          <History>
            <svg width="66" height="30" viewBox="0 0 66 30">
              <rect x="2" y="1" width="56" height="4" fill="#b066e0" />
              <rect x="4" y="8" width="12" height="12" fill="none" stroke="#666" strokeDasharray="3 1" />
              <path d="M12 20l4-4 2 2-3 3z" fill="#e8b050" />
              <path d="M23 8l3-2h9v12l-3 2h-9z" fill="#6cb4e4" />
              <path d="M38 8v10" stroke="#666" />
              <rect x="39" y="5" width="20" height="19" rx="2" fill="#27a5c8" />
              <rect x="43" y="9" width="12" height="11" fill="none" stroke="#2a5060" />
              <path d="M50 20l4-4 2 2-3 3z" fill="#d8c050" />
              <path d="M58 1h12l-5 6v21h-2V7z" fill="#555" />
              <path d="M9 24v4h42v-4M29 24v4" fill="none" stroke="#bbb" />
            </svg>
          </History>
          <Gear c="#888" s={14} />
        </Timeline>
      </Win>
    </Shell>
  );
}
